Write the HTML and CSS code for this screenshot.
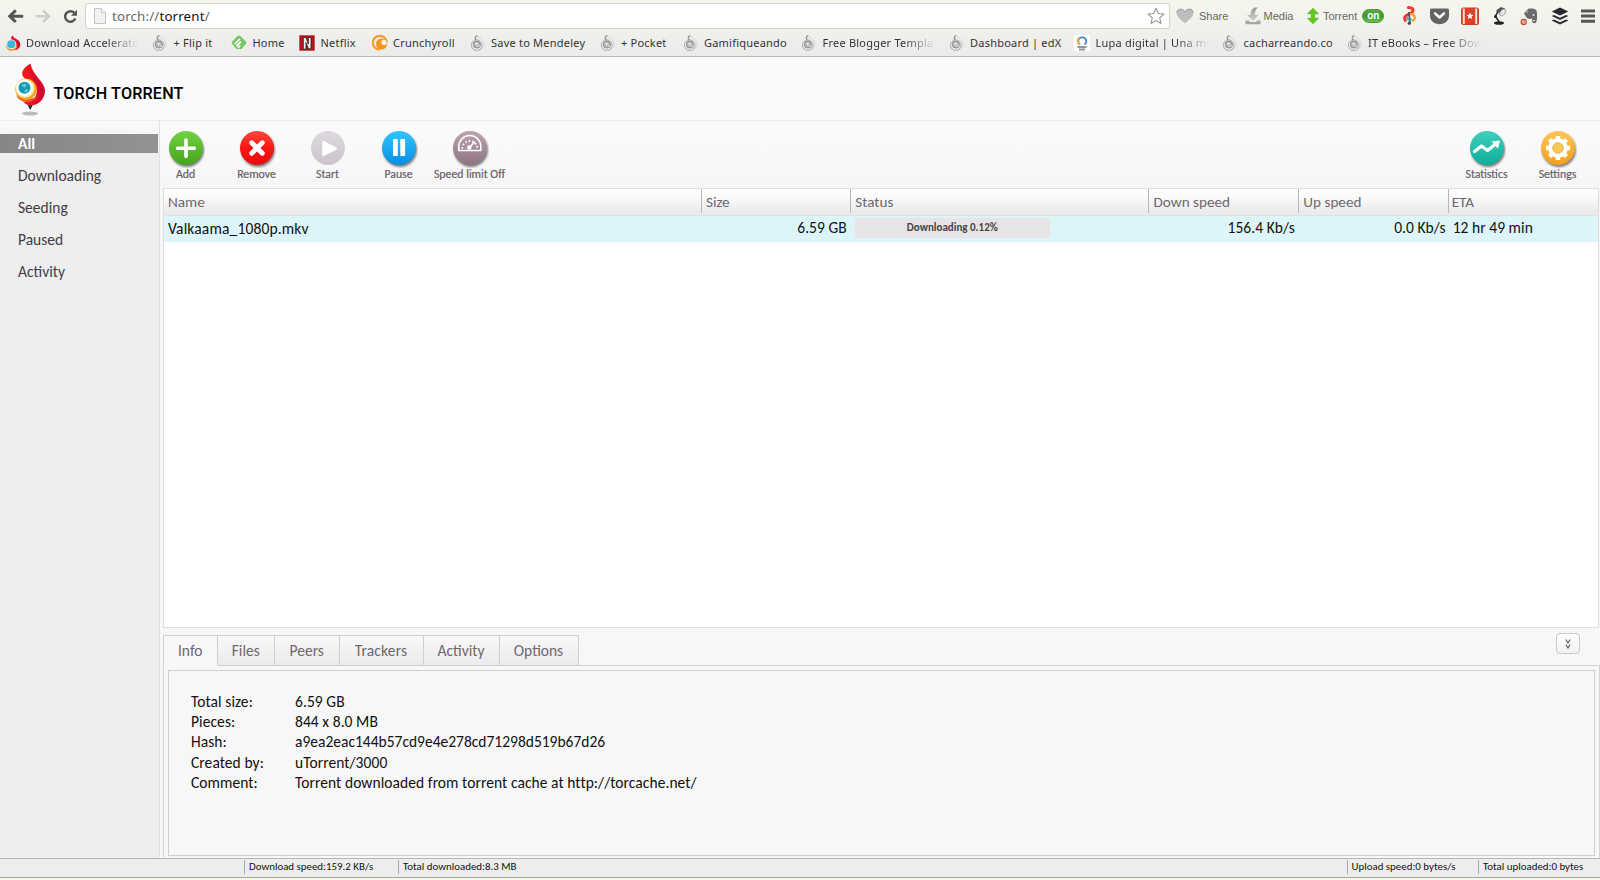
FILE: index.html
```html
<!DOCTYPE html>
<html lang="en">
<head>
<meta charset="utf-8">
<title>Torch Torrent</title>
<link rel="stylesheet" href="styles.css">
</head>
<body>
<svg class="defs" aria-hidden="true">
  <defs>
    <linearGradient id="gGreen" x1="0" y1="0" x2="0" y2="1"><stop offset="0" stop-color="#72d243"/><stop offset="1" stop-color="#45a41c"/></linearGradient>
    <linearGradient id="gRed" x1="0" y1="0" x2="0" y2="1"><stop offset="0" stop-color="#ff4a42"/><stop offset=".5" stop-color="#fb1512"/><stop offset="1" stop-color="#e40d0d"/></linearGradient>
    <linearGradient id="gGrey" x1="0" y1="0" x2="0" y2="1"><stop offset="0" stop-color="#dfdae0"/><stop offset="1" stop-color="#cbc4ca"/></linearGradient>
    <linearGradient id="gBlue" x1="0" y1="0" x2="0" y2="1"><stop offset="0" stop-color="#35c3ff"/><stop offset="1" stop-color="#0590e2"/></linearGradient>
    <linearGradient id="gMauve" x1="0" y1="0" x2="0" y2="1"><stop offset="0" stop-color="#bda4b0"/><stop offset="1" stop-color="#8f7482"/></linearGradient>
    <linearGradient id="gTeal" x1="0" y1="0" x2="0" y2="1"><stop offset="0" stop-color="#3fd0bd"/><stop offset="1" stop-color="#0dae98"/></linearGradient>
    <linearGradient id="gGold" x1="0" y1="0" x2="0" y2="1"><stop offset="0" stop-color="#ffc557"/><stop offset="1" stop-color="#f0a01e"/></linearGradient>
    <linearGradient id="gFlame" x1="0" y1="0" x2="1" y2="0"><stop offset="0" stop-color="#fb1a1a"/><stop offset="1" stop-color="#cf0a36"/></linearGradient>
    <linearGradient id="gSteel" x1="0" y1="0" x2="0" y2="1"><stop offset="0" stop-color="#9a9a9a"/><stop offset="1" stop-color="#cfcfcf"/></linearGradient>
    <symbol id="torch" viewBox="0 0 16 16">
      <path d="M6.300.3C8.500 2.200 13.900 4.500 14 9.500c0 2.500-2 4.800-4.500 5.800L6 6z" fill="#ededed" stroke="#c4c4c4" stroke-width=".6"/>
      <circle cx="6.700" cy="10.200" r="5.300" fill="#e9e9e9" stroke="#9c9c9c" stroke-width=".8"/>
      <circle cx="6.900" cy="9.600" r="3.500" fill="#b9b9b9" stroke="#828282" stroke-width=".9"/>
      <path d="M5 8.600l2-.8 1 1-1.200 1.400zM7.800 11l1.500-1 .2 1.200-1 .8z" fill="#f2f2f2"/>
      <path d="M7.200.5C4.800 1.600 4.600 3.400 6 5" fill="none" stroke="#8c8c8c" stroke-width="1.100"/>
    </symbol>
  </defs>
</svg>

<header class="chrome">
  <div class="navbar">
    <svg class="nav" width="82" height="32" viewBox="0 0 82 32">
      <path d="M9 16.200H23.200M15.800 10.400L9.800 16.200l6 5.800" fill="none" stroke="#555" stroke-width="3"/>
      <path d="M35.500 16.200H48.500M43 10.400L48.900 16.200 43 22" fill="none" stroke="#cfcfca" stroke-width="2.600"/>
      <path d="M74.300 12.800A5.300 5.300 0 1 0 75.300 18.600" fill="none" stroke="#555" stroke-width="2.500"/>
      <path d="M77 9.800V15.700H71z" fill="#555"/>
    </svg>
    <div class="omnibox">
      <svg class="page" width="12" height="16" viewBox="0 0 12 16"><path d="M.5.500H7.500L11.500 4.500V15.500H.5z" fill="#f1f1f1" stroke="#c4c4c4"/><path d="M7.500.500V4.500H11.500" fill="#fafafa" stroke="#c4c4c4"/></svg>
      <span class="url">torch://<b>torrent</b>/</span>
      <svg class="star" width="18" height="18" viewBox="0 0 18 18"><path d="M9 1.200l2.300 5.300 5.700.5-4.300 3.800 1.300 5.600L9 13.500l-5 2.900 1.300-5.600L1 7l5.700-.5z" fill="#fff" stroke="#999" stroke-width="1.100" stroke-linejoin="round"/></svg>
    </div>
    <div class="ext ext-share">
      <svg width="18" height="16" viewBox="0 0 18 16"><path d="M9 15.500C3.500 10.800.5 8 .5 4.600.5 2.200 2.300.7 4.500.7 6.600.7 8.200 1.800 9 3.200 9.800 1.800 11.400.7 13.500.7c2.200 0 4 1.500 4 3.900C17.500 8 14.500 10.800 9 15.500z" fill="#bdbdbd"/><path d="M1 4.500C1 2.500 2.500 1.200 4.500 1.200S8 2.300 9 4c1-1.700 2.500-2.800 4.500-2.800S17 2.500 17 4.500" fill="none" stroke="#9a9a9a" stroke-width=".9"/></svg>
      <span>Share</span>
    </div>
    <div class="ext ext-media">
      <svg width="16" height="18" viewBox="0 0 16 18"><path d="M9.500.5C6.500 2 5.500 4.500 5.500 8H2l6 6 5.500-6H10C9.800 5 10.500 2.500 13 .5z" fill="url(#gSteel)"/><path d="M.5 13.500V17.200H15.500V13.500H12.500L11 15H5l-1.500-1.500z" fill="#a6a6a6"/></svg>
      <span>Media</span>
    </div>
    <div class="ext ext-torrent">
      <svg width="12" height="16" viewBox="0 0 12 16"><path d="M6 .3L11.500 5.700H7.700V10.300H11.500L6 15.700.5 10.300H4.300V5.700H.5z" fill="#62c91f" stroke="#46a812" stroke-width=".6"/></svg>
      <span>Torrent</span><em>on</em>
    </div>
    <svg class="exticons" width="200" height="32" viewBox="1396 0 200 32">
      <path d="M1408.300 7.500c5 0 6.500 3 2.500 5.500-5 2.300-7.500 3.800-5.500 7.500" fill="none" stroke="#ee3a31" stroke-width="3" stroke-linecap="round"/>
      <path d="M1408.800 12l1.300 11" stroke="#5d4a52" stroke-width="1.700"/>
      <path d="M1410 14.200c5-.5 7 4.500 2 7" fill="none" stroke="#f5a524" stroke-width="2.200"/>
      <path d="M1407.500 17.200c-.5 3 2.500 3.500 4 1.500" fill="none" stroke="#2ba8ca" stroke-width="1.800"/>
      <circle cx="1409.300" cy="23.200" r="1.700" fill="#48505c"/>
      <path d="M1430 10q0-1.500 1.500-1.500H1447.500q1.500 0 1.500 1.500V15.500c0 11.500-19 11.500-19 0z" fill="#646464"/>
      <path d="M1435 13.300l4.500 4.200 4.500-4.200" fill="none" stroke="#fff" stroke-width="2.400" stroke-linecap="round" stroke-linejoin="round"/>
      <rect x="1461" y="7.500" width="18" height="17.500" rx="2.500" fill="#c5442a"/>
      <path d="M1463.800 8.500V24M1476.200 8.500V24" stroke="#f7ded3" stroke-width="2"/>
      <rect x="1465.500" y="8" width="9" height="15" fill="#e34126"/>
      <path d="M1470 12.500l1 2.300 2.400.2-1.800 1.600.5 2.400-2.100-1.300-2.100 1.300.5-2.400-1.800-1.600 2.400-.2z" fill="#fff"/>
      <path d="M1498 11L1495.500 16.500 1499.500 22.500" fill="none" stroke="#333" stroke-width="1.700"/>
      <path d="M1496 10.500l5-3.500 4 1.500-4.500 6.500z" fill="#555"/><ellipse cx="1502.700" cy="12.500" rx="2.500" ry="3.900" transform="rotate(38 1502.700 12.500)" fill="#e6e6e6" stroke="#888" stroke-width=".7"/>
      <ellipse cx="1499" cy="23" rx="5" ry="1.800" fill="#222"/><circle cx="1495.500" cy="16.500" r="1.500" fill="#222"/>
      <path d="M1524 13.500l4-4.500c3-1 7-.5 8.500 1.500 1 4 .8 8-.3 12-1.200 1.200-4.200.8-4-1.500v-2.500c-2 1-5.200.5-6-1.500z" fill="#6a6a6a"/>
      <path d="M1524 13h4V9.300z" fill="#999"/><circle cx="1533.500" cy="15" r="1" fill="#e5e5e5"/><path d="M1533 20.500h2" stroke="#ddd"/>
      <circle cx="1523.700" cy="22" r="2.600" fill="#e9a294" stroke="#bd4c3a" stroke-width="1.100"/>
      <g fill="#272b2e"><path d="M1560 7.500l8.300 4-8.300 4-8.300-4z"/><path d="M1551.700 16l2.300-1.100 6 2.900 6-2.900 2.300 1.100-8.300 4z"/><path d="M1551.700 20.500l2.300-1.100 6 2.900 6-2.900 2.300 1.100-8.300 4z"/></g>
      <path d="M1581 11H1595M1581 16.100H1595M1581 21.200H1595" stroke="#555" stroke-width="3"/>
    </svg>
  </div>
  <nav class="bookmarks">
    <a class="fade"><svg viewBox="0 0 16 16"><path d="M8 .3C5.600 1.800 6 3.500 6.500 5L3 6.500C1 9 1.500 13.500 5 15h6c4.500-1.500 5.500-6 3-9C12.500 4 8 3.500 8 .3z" fill="url(#gFlame)"/><path d="M1 10.500a5.500 5 0 0 0 11.300 0z" fill="#f58a2a"/><circle cx="6.500" cy="9.500" r="4.900" fill="#fbe9c8"/><circle cx="6.300" cy="9.200" r="4" fill="#37b6d8"/></svg><span>Download Accelerato</span></a>
    <a><svg viewBox="0 0 16 16"><use href="#torch"/></svg><span>+ Flip it</span></a>
    <a><svg viewBox="0 0 16 16"><path d="M8 .5q.8 0 1.400.6L15 6.800q.9 1 0 2L10.500 14H5.500L1 8.800q-.9-1 0-2L6.600 1.100Q7.200.5 8 .5z" fill="#76c765"/><path d="M4.300 8.500L8.500 4.300M6 10.600L9.500 7.200M7.500 12.300l1.200-1.200" stroke="#fff" stroke-width="1.700" stroke-linecap="round"/></svg><span>Home</span></a>
    <a><svg viewBox="0 0 16 16"><path d="M.3.300H15.700V15.700H.3z" fill="#b3171c"/><path d="M4.300 2.500H7L9.300 9V2.500H12V14L9.300 13.500 7 7.500V14L4.300 14.300z" fill="#eee" stroke="#222" stroke-width=".8"/></svg><span>Netflix</span></a>
    <a><svg viewBox="0 0 16 16"><path d="M14.800 7.500A7 7 0 1 0 7.500 14.800" fill="none" stroke="#f5a02a" stroke-width="2.200"/><circle cx="9.500" cy="9" r="5.500" fill="#f7941e"/><circle cx="12" cy="7.400" r="2.600" fill="#efefef"/></svg><span>Crunchyroll</span></a>
    <a><svg viewBox="0 0 16 16"><use href="#torch"/></svg><span>Save to Mendeley</span></a>
    <a><svg viewBox="0 0 16 16"><use href="#torch"/></svg><span>+ Pocket</span></a>
    <a><svg viewBox="0 0 16 16"><use href="#torch"/></svg><span>Gamifiqueando</span></a>
    <a class="fade"><svg viewBox="0 0 16 16"><use href="#torch"/></svg><span>Free Blogger Templa</span></a>
    <a><svg viewBox="0 0 16 16"><use href="#torch"/></svg><span>Dashboard | edX</span></a>
    <a class="fade"><svg viewBox="0 0 16 16"><path d="M0 0H16V16H0z" fill="#fff"/><path d="M6 9.500A4 4 0 1 1 10.500 9.500" fill="none" stroke="#4b8fd0" stroke-width="2"/><path d="M5 2.800A4 4 0 0 0 6 9.500" fill="none" stroke="#eeb14b" stroke-width="2"/><path d="M3.500 12H12.500M5 14.500H11" stroke="#9a938c" stroke-width="1.800"/></svg><span>Lupa digital | Una mi</span></a>
    <a><svg viewBox="0 0 16 16"><use href="#torch"/></svg><span>cacharreando.co</span></a>
    <a class="fade"><svg viewBox="0 0 16 16"><use href="#torch"/></svg><span>IT eBooks – Free Dow</span></a>
  </nav>
</header>

<div class="brand">
  <svg width="34" height="54" viewBox="0 0 34 54">
    <ellipse cx="16" cy="50.500" rx="8" ry="2" fill="#bbb"/>
    <path d="M13.500 41.500h5.500l-2.700 5.600z" fill="#222"/>
    <path d="M16.500.5C10 4 6.500 9 9 13.500c1.500 2.800 4.500 3.500 7 6L8 36c2 5 6 6.500 9 6.500C25 42 31 36 31 27.500 31 19 19 13 16.500.5z" fill="url(#gFlame)"/>
    <path d="M17 6c1 9 12 13 12 22 0 6-4 11-9 12.500 8-4 8-12 5-17-3-5-9-8-8-17.500z" fill="#b90b30" opacity=".45"/>
    <circle cx="11.800" cy="28" r="11" fill="#fafafa"/>
    <path d="M2 32a12 11.500 0 0 0 22 0c-4 5-16 6-22 0z" fill="#ef5423"/>
    <circle cx="12" cy="26.300" r="10.700" fill="#f5a31e"/>
    <circle cx="11" cy="25.300" r="9.500" fill="#ffe9a0"/>
    <circle cx="10.500" cy="25" r="8.200" fill="#fff"/>
    <circle cx="10.500" cy="24.800" r="6" fill="#149db2"/>
    <path d="M7.500 22.200l3-1.500 2 1.500-2 2.500zM10 28l3-2 1 1.500-2 2z" fill="#6fd0dc"/>
  </svg>
  <h1>TORCH TORRENT</h1>
</div>

<div class="app">
  <aside class="side">
    <a class="on">All</a><a>Downloading</a><a>Seeding</a><a>Paused</a><a>Activity</a>
  </aside>
  <main>
    <div class="tools">
      <button><svg viewBox="0 0 38 38"><circle class="disc" cx="19" cy="18" r="17" fill="url(#gGreen)"/><path d="M19 10V26.500M10.700 18.200H27.300" stroke="#fff" stroke-width="3.600" stroke-linecap="round"/></svg><span>Add</span></button>
      <button><svg viewBox="0 0 38 38"><circle class="disc" cx="19" cy="18" r="17" fill="url(#gRed)"/><path d="M13.700 12.700L24.300 23.300M24.300 12.700L13.700 23.300" stroke="#fff" stroke-width="4.800" stroke-linecap="round"/></svg><span>Remove</span></button>
      <button><svg viewBox="0 0 38 38"><circle cx="19" cy="18" r="17" fill="url(#gGrey)"/><path d="M14 11.500V25.500L27.500 18.500z" fill="#fff" stroke="#fff" stroke-width="1.500" stroke-linejoin="round"/></svg><span>Start</span></button>
      <button><svg viewBox="0 0 38 38"><circle class="disc" cx="19" cy="18" r="17" fill="url(#gBlue)"/><rect x="13" y="9" width="4.800" height="17" rx="1" fill="#fff"/><rect x="20.300" y="9" width="4.800" height="17" rx="1" fill="#fff"/></svg><span>Pause</span></button>
      <button><svg viewBox="0 0 38 38"><circle class="disc" cx="19" cy="18" r="17" fill="url(#gMauve)"/><path d="M7.800 20.500V16.500a11 11 0 0 1 22 0V20.500z" fill="none" stroke="#fff" stroke-width="1.600" stroke-linejoin="round"/><path d="M11.300 18.500a7.500 7.500 0 0 1 15 0" fill="none" stroke="#fff" stroke-width="2" stroke-dasharray="1.500 2"/><path d="M18 18L24 11.500" stroke="#fff" stroke-width="1.700"/><circle cx="18.300" cy="17.500" r="2.200" fill="#fff"/></svg><span>Speed limit Off</span></button>
      <i></i>
      <button><svg viewBox="0 0 38 38"><circle class="disc" cx="19" cy="18" r="17" fill="url(#gTeal)"/><path d="M6.500 21.500L13.500 16 19.500 20.500 27.500 14" fill="none" stroke="#fff" stroke-width="3.200" stroke-linejoin="round" stroke-linecap="round"/><path d="M23.500 11.500L32 10.500 30 18.800z" fill="#fff"/></svg><span>Statistics</span></button>
      <button><svg viewBox="0 0 38 38"><circle class="disc" cx="19" cy="18" r="17" fill="url(#gGold)"/><circle cx="19" cy="18" r="7.500" fill="none" stroke="#fff" stroke-width="4.800"/><path d="M19 6V30M7 18H31M10.500 9.500L27.500 26.500M27.500 9.500L10.500 26.500" stroke="#fff" stroke-width="4.400"/><circle cx="19" cy="18" r="5.300" fill="#f8c955" stroke="#dfa535" stroke-width=".8"/></svg><span>Settings</span></button>
    </div>
    <section class="list">
      <div class="row head"><span>Name</span><span>Size</span><span>Status</span><span>Down speed</span><span>Up speed</span><span>ETA</span></div>
      <div class="row item"><span>Valkaama_1080p.mkv</span><span class="num">6.59 GB</span><span class="state"><b class="bar">Downloading 0.12%</b></span><span class="num">156.4 Kb/s</span><span class="num">0.0 Kb/s</span><span class="eta">12 hr 49 min</span></div>
    </section>
    <section class="detail">
      <div class="tabs">
        <a class="on">Info</a><a>Files</a><a>Peers</a><a>Trackers</a><a>Activity</a><a>Options</a>
        <button class="fold"><svg width="6" height="10" viewBox="0 0 6 10"><path d="M.8.500L3 4 5.200.500M.8 5.500L3 9 5.200 5.500" fill="none" stroke="#555" stroke-width="1.100"/></svg></button>
      </div>
      <div class="pane">
        <dl>
          <dt>Total size:</dt><dd>6.59 GB</dd>
          <dt>Pieces:</dt><dd>844 x 8.0 MB</dd>
          <dt>Hash:</dt><dd class="hash">a9ea2eac144b57cd9e4e278cd71298d519b67d26</dd>
          <dt>Created by:</dt><dd>uTorrent/3000</dd>
          <dt>Comment:</dt><dd>Torrent downloaded from torrent cache at http://torcache.net/</dd>
        </dl>
      </div>
    </section>
  </main>
</div>

<footer class="status">
  <span></span><span>Download speed:159.2 KB/s</span><span>Total downloaded:8.3 MB</span><span>Upload speed:0 bytes/s</span><span>Total uploaded:0 bytes</span>
</footer>
</body>
</html>
```
FILE: styles.css
```css
* { box-sizing: border-box; }
body {
  margin: 0; width: 1600px; height: 880px; overflow: hidden;
  display: flex; flex-direction: column;
  background: #f7f7ee; color: #111;
  font: 15.500px/20px Carlito, Calibri, Lato, sans-serif;
}
.defs { position: absolute; width: 0; height: 0; }
svg { display: block; flex: none; }
button { border: 0; background: none; padding: 0; font: inherit; color: inherit; }

/* browser chrome */
.chrome { flex: none; height: 57px; border-bottom: 1px solid #b9b9b9; background: linear-gradient(#f7f6ed, #efefec 60%, #ebebeb); }
.navbar { display: flex; height: 32px; }
.nav { margin-right: 3px; }
.omnibox {
  width: 1085px; height: 26px; margin-top: 3px; padding: 0 4px 0 8px;
  display: flex; align-items: center;
  border: 1px solid #d2d2cc; border-radius: 3px; background: #fff;
}
.page { margin-right: 6px; }
.url { flex: 1; font: 13.3px/20px "Noto Sans", sans-serif; letter-spacing: .16px; color: #666; }
.url b { font-weight: 400; color: #111; }
.ext { display: flex; align-items: center; height: 32px; font: 11px/14px "Liberation Sans", Arial, sans-serif; color: #666; }
.ext-share { margin-left: 6px; width: 69px; gap: 5px; }
.ext-media { width: 62px; gap: 2.500px; }
.ext-torrent { width: 89px; gap: 4px; }
.ext em {
  width: 22px; height: 14px; margin-left: 1px; border-radius: 7px;
  background: linear-gradient(#58a842, #3c9a27 50%, #6cc04a); border: 1px solid #4c9a38;
  color: #fff; font: bold 10px/11px "Liberation Sans", sans-serif; text-align: center;
}
.bookmarks {
  display: grid; height: 22px; padding-left: 4.5px; align-items: center;
  grid-template-columns: 147.5px 79px 68px 72.5px 98px 130px 83px 118.5px 147.5px 125.5px 148px 124.500px 140px;
  font: 11px/16px "Noto Sans", sans-serif; letter-spacing: .22px; color: #333; white-space: nowrap;
}
.bookmarks a { display: flex; align-items: center; gap: 5.5px; }
.bookmarks svg { width: 16px; height: 16px; }
.bookmarks .fade span { -webkit-mask-image: linear-gradient(90deg, #000 80px, transparent 114px); }

/* product bar */
.brand { flex: none; height: 64px; display: flex; padding: 6px 0 0 14px; border-bottom: 1px solid #ececec; background: #fafafa; }
.brand h1 { margin: 21px 0 0 5.500px; font: 500 16.2px/20px Roboto, sans-serif; letter-spacing: .15px; color: #000; }

.app { flex: 1; display: flex; min-height: 0; }
.side {
  width: 160px; padding: 12.500px 1px 0 0; border-right: 1px solid #e2e2e2;
  background: linear-gradient(#fafafa, #eee 34px);
}
.side a { display: block; height: 19px; margin-bottom: 13.1px; padding-left: 18px; line-height: 19px; color: #443c44; }
.side .on { background: linear-gradient(90deg, #868686, #939393); color: #fff; font-weight: 700; }
main { flex: 1; display: flex; flex-direction: column; background: #f7f7f7; min-width: 0; }

.tools { flex: none; display: flex; height: 67px; padding: 9px 7px 0 0; background: linear-gradient(#fbfbfb, #f6f6f6); }
.tools button { width: 71px; display: flex; flex-direction: column; align-items: center; font-size: 11.8px; line-height: 13px; color: #666066; white-space: nowrap; -webkit-text-stroke: .2px #666066; }
.tools button:first-child { margin-left: -10px; }
.tools i { flex: 1; }
.tools svg { width: 38px; height: 38px; }
.tools .disc { filter: drop-shadow(1px 2px 1px rgba(0, 0, 0, .5)); }

.list { flex: none; height: 440px; margin: 0 1px 0 3px; border: 1px solid #ddd; background: #fff; }
.row { display: grid; grid-template-columns: 537px 149.300px 298.200px 149.800px 149.400px 1fr; }
.head { height: 27px; background: linear-gradient(#fcfcfc 25%, #ebebeb 85%); border-bottom: 1px solid #e1e1e1; font-size: 15.200px; color: #6e686e; }
.head span { height: 24px; padding-left: 4px; line-height: 27px; border-left: 1px solid #b9b6b9; }
.head span:first-child { border: 0; }
.head span:last-child { padding-left: 3px; }
.item { height: 26px; background: #ddf5f8; letter-spacing: .05px; line-height: 24px; }
.item span:first-child { padding-left: 4px; line-height: 26px; letter-spacing: .15px; }
.item .num { text-align: right; padding-right: 3.500px; }
.item .num + .num { padding-right: 2px; }
.item .eta { padding-left: 5px; }
.state { padding: 2px 0 0 4.500px; }
.bar { display: block; width: 195px; height: 20px; background: #e6e4e6; border-radius: 2px; text-align: center; font-size: 11px; line-height: 20px; letter-spacing: 0; color: #444; }

.detail { flex: 1; display: flex; flex-direction: column; padding: 7px 0 1px 3px; }
.tabs { position: relative; display: flex; height: 31px; border-bottom: 1px solid #d8d2d8; }
.tabs a {
  height: 31px; width: 57.500px; text-align: center; line-height: 30px; color: #6e686e;
  border: 1px solid #d3ccd3; border-left-width: 0; background: linear-gradient(#f8f8f8, #ebebeb);
}
.tabs a:nth-child(1) { width: 54.500px; border-left-width: 1px; border-bottom-color: #f7f7f7; background: #f8f8f8; }
.tabs a:nth-child(3) { width: 64.500px; }
.tabs a:nth-child(4) { width: 84px; letter-spacing: .2px; }
.tabs a:nth-child(5) { width: 76px; }
.tabs a:nth-child(6) { width: 79px; }
.fold {
  position: absolute; right: 20px; top: -2px; width: 24px; height: 21px;
  display: flex; align-items: center; justify-content: center;
  border: 1px solid #cbc5cb; border-radius: 4px; background: linear-gradient(#fff, #f0f0f0);
}
.pane { flex: 1; padding: 4px; border: 1px solid #d8d2d8; border-top: 0; }
dl {
  margin: 0; height: 186px; padding: 20.500px 0 0 22px;
  display: grid; grid-template-columns: 104px 1fr; grid-auto-rows: 20.400px; align-content: start;
  border: 1px solid #d3cdd3; letter-spacing: .07px;
}
dd { margin: 0; }
.hash { letter-spacing: 0; }

.status {
  flex: none; height: 20px; margin-bottom: 2px; display: grid;
  grid-template-columns: 244px 154px 948.500px 131.500px 1fr;
  border-top: 1px solid #b5b5b5; border-bottom: 1px solid #a5a5a5;
  background: #ededed; font-size: 10.900px; line-height: 14px; color: #111;
}
.status span { height: 14px; margin-top: 1px; padding-left: 4px; border-left: 1px solid #aaa; }
.status span:first-child { border: 0; }
```
